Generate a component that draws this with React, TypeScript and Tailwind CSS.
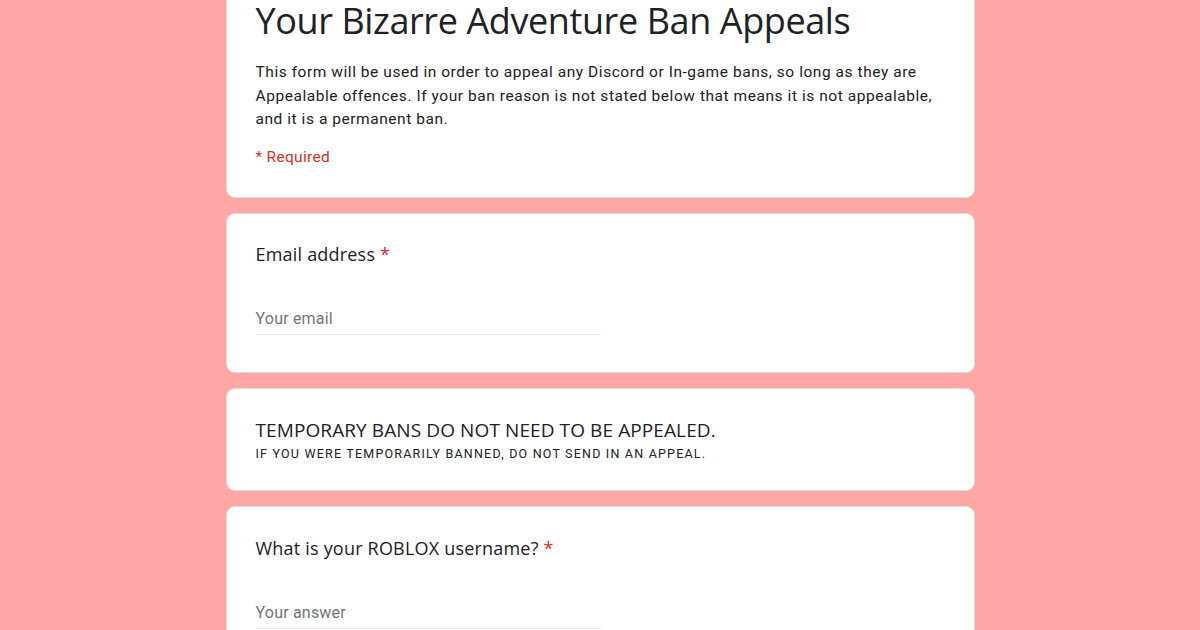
export default function App() {
  return (
    <div className="min-h-[630px] h-[630px] overflow-hidden bg-[#ffa6a6] font-['Roboto',sans-serif] text-[#202124]">
      <div className="mx-auto w-[749px] flex flex-col gap-[15px]">
        {/* Title card */}
        <div className="bg-white rounded-b-[9px] border-x border-b border-[#e3dada] px-[29px] pb-[28px]">
          <h1 className="font-['Open_Sans',sans-serif] text-[36px] leading-[44px] tracking-[-0.4px] mt-[-1px]">
            Your Bizarre Adventure Ban Appeals
          </h1>
          <p className="mt-[18px] text-[15.5px] leading-[23.5px] tracking-[0.55px]">
            This form will be used in order to appeal any Discord or In-game bans, so long as they are Appealable offences. If your ban reason is not stated below that means it is not appealable, and it is a permanent ban.
          </p>
          <div className="mt-[14px] text-[15.5px] leading-[23px] tracking-[0.3px] text-[#d93025]">* Required</div>
        </div>

        {/* Email */}
        <div className="bg-white rounded-[9px] border border-[#e3dada] px-[29px] pt-[28px] pb-[37px]">
          <div className="font-['Open_Sans',sans-serif] text-[18px] leading-[24px] tracking-[0.2px]">
            Email address <span className="text-[#d93025]">*</span>
          </div>
          <div className="mt-[43px] w-[345px] border-b border-[#e6e6e6] pb-[5px] text-[16px] leading-[20px] tracking-[0.2px] text-[#70757a]">
            Your email
          </div>
        </div>

        {/* Notice */}
        <div className="bg-white rounded-[9px] border border-[#e3dada] px-[29px] pt-[29px] pb-[28px]">
          <div className="font-['Open_Sans',sans-serif] text-[19px] leading-[24px] tracking-[0.1px]">
            TEMPORARY BANS DO NOT NEED TO BE APPEALED.
          </div>
          <div className="mt-[4px] text-[12.5px] leading-[16px] tracking-[1.2px]">
            IF YOU WERE TEMPORARILY BANNED, DO NOT SEND IN AN APPEAL.
          </div>
        </div>

        {/* Username */}
        <div className="bg-white rounded-[9px] border border-[#e3dada] px-[29px] pt-[29px] pb-[37px]">
          <div className="font-['Open_Sans',sans-serif] text-[18px] leading-[24px] tracking-[0.2px]">
            What is your ROBLOX username? <span className="text-[#d93025]">*</span>
          </div>
          <div className="mt-[43px] w-[345px] border-b border-[#e6e6e6] pb-[5px] text-[16px] leading-[20px] tracking-[0.2px] text-[#70757a]">
            Your answer
          </div>
        </div>
      </div>
    </div>
  )
}
